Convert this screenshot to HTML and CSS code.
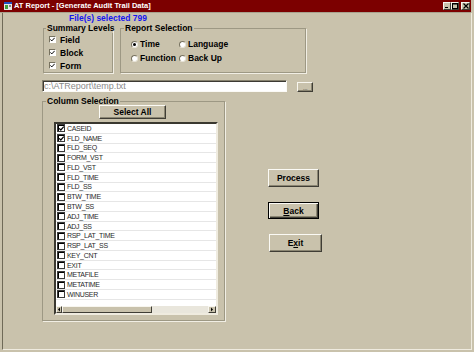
FILE: index.html
```html
<!DOCTYPE html>
<html lang="en">
<head>
    <meta charset="utf-8">
    <title>AT Report</title>
    <link rel="stylesheet" href="styles.css">
</head>
<body>
    <div class="window">
        <div class="titlebar">
            <svg class="app-icon" width="8" height="8" viewBox="0 0 8 8">
                <rect x="0" y="0" width="8" height="8" fill="#e8e8e8"/>
                <rect x="0" y="0" width="8" height="2" fill="#2050c0"/>
                <rect x="1" y="3" width="3" height="4" fill="#40a040"/>
                <rect x="5" y="3" width="2" height="2" fill="#808080"/>
            </svg>
            <span class="title">AT Report - [Generate Audit Trail Data]</span>
            <div class="caption-btns">
                <span class="cap-btn"><svg width="6" height="6" viewBox="0 0 6 6"><rect x="1" y="4" width="3" height="1" fill="#000"/></svg></span>
                <span class="cap-btn"><svg width="6" height="6" viewBox="0 0 6 6"><rect x="0.5" y="0.5" width="5" height="5" fill="none" stroke="#000"/><rect x="0" y="0" width="6" height="1.5" fill="#000"/></svg></span>
                <span class="cap-btn close"><svg width="6" height="6" viewBox="0 0 6 6"><path d="M0.5 0.5 L5.5 5.5 M5.5 0.5 L0.5 5.5" stroke="#000" stroke-width="1.2"/></svg></span>
            </div>
        </div>

        <div class="client">
            <div class="selected">File(s) selected 799</div>

            <div class="options">
                <fieldset class="group summary">
                    <legend>Summary Levels</legend>
                    <label class="check"><span class="box"><svg width="5" height="5" viewBox="0 0 5 5"><path d="M0.3 2.4 L1.8 3.9 L4.7 0.8" fill="none" stroke="#000" stroke-width="1"/></svg></span>Field</label>
                    <label class="check"><span class="box"><svg width="5" height="5" viewBox="0 0 5 5"><path d="M0.3 2.4 L1.8 3.9 L4.7 0.8" fill="none" stroke="#000" stroke-width="1"/></svg></span>Block</label>
                    <label class="check"><span class="box"><svg width="5" height="5" viewBox="0 0 5 5"><path d="M0.3 2.4 L1.8 3.9 L4.7 0.8" fill="none" stroke="#000" stroke-width="1"/></svg></span>Form</label>
                </fieldset>

                <fieldset class="group report">
                    <legend>Report Selection</legend>
                    <div class="radios">
                        <label class="radio"><span class="dot on"></span>Time</label>
                        <label class="radio"><span class="dot"></span>Language</label>
                        <label class="radio"><span class="dot"></span>Function</label>
                        <label class="radio"><span class="dot"></span>Back Up</label>
                    </div>
                </fieldset>
            </div>

            <div class="path-row">
                <div class="path">c:\ATReport\temp.txt</div>
                <button class="browse">...</button>
            </div>

            <div class="main-row">
                <fieldset class="group columns">
                    <legend>Column Selection</legend>
                    <button class="btn select-all">Select All</button>
                    <div class="listbox">
                        <ul class="items">
                            <li><span class="lbox"><svg width="5" height="5" viewBox="0 0 5 5"><path d="M0.2 2.4 L1.8 4 L4.8 0.6" fill="none" stroke="#000" stroke-width="1.2"/></svg></span>CASEID</li>
                            <li><span class="lbox"><svg width="5" height="5" viewBox="0 0 5 5"><path d="M0.2 2.4 L1.8 4 L4.8 0.6" fill="none" stroke="#000" stroke-width="1.2"/></svg></span>FLD_NAME</li>
                            <li><span class="lbox"></span>FLD_SEQ</li>
                            <li><span class="lbox"></span>FORM_VST</li>
                            <li><span class="lbox"></span>FLD_VST</li>
                            <li><span class="lbox"></span>FLD_TIME</li>
                            <li><span class="lbox"></span>FLD_SS</li>
                            <li><span class="lbox"></span>BTW_TIME</li>
                            <li><span class="lbox"></span>BTW_SS</li>
                            <li><span class="lbox"></span>ADJ_TIME</li>
                            <li><span class="lbox"></span>ADJ_SS</li>
                            <li><span class="lbox"></span>RSP_LAT_TIME</li>
                            <li><span class="lbox"></span>RSP_LAT_SS</li>
                            <li><span class="lbox"></span>KEY_CNT</li>
                            <li><span class="lbox"></span>EXIT</li>
                            <li><span class="lbox"></span>METAFILE</li>
                            <li><span class="lbox"></span>METATIME</li>
                            <li><span class="lbox"></span>WINUSER</li>
                        </ul>
                        <div class="hscroll">
                            <span class="arrow"><svg width="4" height="5" viewBox="0 0 4 5"><path d="M3 0.5 L1 2.5 L3 4.5 Z" fill="#000"/></svg></span>
                            <span class="thumb"></span>
                            <span class="track"></span>
                            <span class="arrow"><svg width="4" height="5" viewBox="0 0 4 5"><path d="M1 0.5 L3 2.5 L1 4.5 Z" fill="#000"/></svg></span>
                        </div>
                    </div>
                </fieldset>

                <div class="actions">
                    <button class="btn process">Process</button>
                    <button class="btn default"><u>B</u>ack</button>
                    <button class="btn exit">E<u>x</u>it</button>
                </div>
            </div>
        </div>
    </div>
</body>
</html>
```

FILE: styles.css
```css
body {
    margin: 0;
    background-color: #c9c2ac;
    font-family: "Liberation Sans", Arial, sans-serif;
    font-size: 8.5px;
    font-weight: bold;
    color: #000;
}
.window {
    width: 474px;
    height: 352px;
    overflow: hidden;
}

/* title bar */
.titlebar {
    height: 12px;
    margin-right: 3px;
    padding-left: 4px;
    display: flex;
    align-items: center;
    background-color: #7c0000;
    color: #fff;
    border-bottom: 1px solid #a8a28e;
}
.app-icon {
    margin-right: 2px;
}
.title {
    font-size: 7.5px;
    line-height: 12px;
}
.caption-btns {
    margin-left: auto;
    margin-right: 1px;
    display: flex;
    gap: 0;
}
.cap-btn {
    width: 8px;
    height: 8px;
    box-sizing: border-box;
    display: flex;
    align-items: center;
    justify-content: center;
    background-color: #c9c2ac;
    border: 1px solid;
    border-color: #f8f6ef #3f3d35 #3f3d35 #f8f6ef;
}
.cap-btn.close {
    margin-left: 2px;
    width: 9px;
}

/* client area */
.client {
    height: 337px;
    margin-left: 2px;
    width: 470px;
    box-sizing: border-box;
    padding: 1px 0 0 39px;
    border-left: 1px solid #6f6a58;
    border-right: 1px solid #efebdf;
    border-bottom: 1px solid #efebdf;
}
.selected {
    margin-left: 27px;
    line-height: 9px;
    color: #1515f0;
}

.group {
    margin: 0;
    padding: 0;
    min-width: 0;
    box-sizing: border-box;
    border: 1px solid #9d9884;
    box-shadow: 1px 1px 0 #f1eee4;
}
.group legend {
    padding: 0 1px;
    line-height: 10px;
    white-space: nowrap;
}

.options {
    display: flex;
}
.summary {
    margin-left: 1px;
    width: 70px;
    height: 50px;
    padding-left: 2px;
}
.check {
    display: flex;
    align-items: center;
    gap: 4px;
    height: 13px;
    margin-left: 3px;
}
.box {
    width: 7px;
    height: 7px;
    box-sizing: border-box;
    display: flex;
    align-items: center;
    justify-content: center;
    background-color: #fff;
    border: 1px solid;
    border-color: #77725f #fff #fff #77725f;
}

.report {
    margin-left: 7px;
    width: 186px;
    height: 50px;
    padding-left: 3px;
}
.radios {
    margin: 4px 0 0 7px;
    display: grid;
    grid-template-columns: 48px auto;
    grid-auto-rows: 14px;
}
.radio {
    display: flex;
    align-items: center;
    gap: 2px;
}
.dot {
    width: 7px;
    height: 7px;
    box-sizing: border-box;
    border-radius: 50%;
    background-color: #fff;
    border: 1px solid;
    border-color: #77725f #e8e4d8 #e8e4d8 #77725f;
    display: flex;
    align-items: center;
    justify-content: center;
}
.dot.on::after {
    content: "";
    width: 3px;
    height: 3px;
    border-radius: 50%;
    background-color: #000;
}

/* path row */
.path-row {
    margin-top: 7px;
    display: flex;
    align-items: flex-start;
}
.path {
    width: 245px;
    height: 12px;
    box-sizing: border-box;
    padding-left: 1px;
    background-color: #fff;
    border: 1px solid;
    border-color: #86816e #fbfaf6 #fbfaf6 #86816e;
    box-shadow: inset 1px 1px #3c3a33;
    color: #8a8a8a;
    font-size: 9px;
    font-weight: normal;
    line-height: 10px;
}
.browse {
    margin: 2px 0 0 10px;
    width: 16px;
    height: 10px;
    padding: 0;
    box-sizing: border-box;
    background-color: #c9c2ac;
    border: 1px solid;
    border-color: #f8f6ef #3f3d35 #3f3d35 #f8f6ef;
    box-shadow: inset -1px -1px #8b8673;
    font: 7px/5px "Liberation Sans", sans-serif;
    letter-spacing: -0.5px;
    color: #6d6a5e;
    overflow: hidden;
}

/* buttons */
.btn {
    padding: 0;
    box-sizing: border-box;
    background-color: #c9c2ac;
    border: 1px solid;
    border-color: #fbfaf5 #3f3d35 #3f3d35 #fbfaf5;
    box-shadow: inset -1px -1px #8b8673;
    font: bold 8.5px "Liberation Sans", Arial, sans-serif;
    color: #000;
}
.btn.default {
    border: 1px solid #000;
    box-shadow: inset 1px 1px #fbfaf5, inset -1px -1px #3f3d35, inset -2px -2px #8b8673;
}

/* column selection */
.main-row {
    margin-top: 4px;
    display: flex;
    align-items: flex-start;
}
.columns {
    width: 183px;
    height: 225px;
    padding-left: 3px;
}
.select-all {
    display: block;
    margin: -1px 0 0 53px;
    width: 67px;
    height: 14px;
}
.listbox {
    margin: 3px 0 0 8px;
    width: 164px;
    height: 193px;
    box-sizing: border-box;
    background-color: #fff;
    border: 2px solid;
    border-color: #3a3830 #efebdf #efebdf #3a3830;
}
.items {
    list-style: none;
    margin: 0;
    padding: 0;
    height: 182px;
    overflow: hidden;
}
.items li {
    height: 9.78px;
    box-sizing: border-box;
    display: flex;
    align-items: center;
    gap: 2px;
    padding-left: 1px;
    border-bottom: 1px solid #e6e6e6;
    font-size: 7px;
    font-weight: normal;
    letter-spacing: -0.3px;
    color: #2a2a2a;
}
.lbox {
    width: 8px;
    height: 8px;
    box-sizing: border-box;
    display: flex;
    align-items: center;
    justify-content: center;
    border: 1px solid #3a3a3a;
    box-shadow: inset 1px 1px #000;
    background-color: #fff;
}
.hscroll {
    height: 7px;
    display: flex;
}
.arrow {
    width: 6px;
    box-sizing: border-box;
    display: flex;
    align-items: center;
    justify-content: center;
    background-color: #c9c2ac;
    border: 1px solid;
    border-color: #f8f6ef #3f3d35 #3f3d35 #f8f6ef;
}
.arrow:last-child {
    width: 8px;
}
.thumb {
    width: 90px;
    box-sizing: border-box;
    background-color: #c9c2ac;
    border: 1px solid;
    border-color: #f8f6ef #3f3d35 #3f3d35 #f8f6ef;
}
.track {
    flex: 1;
    background-color: #e9e6dc;
}

.actions {
    margin-left: 43px;
    padding-top: 73px;
    display: flex;
    flex-direction: column;
    align-items: flex-start;
}
.process {
    width: 51px;
    height: 18px;
}
.default {
    margin-top: 15px;
    width: 51px;
    height: 17px;
}
.exit {
    margin: 15px 0 0 1px;
    width: 53px;
    height: 18px;
}
```
